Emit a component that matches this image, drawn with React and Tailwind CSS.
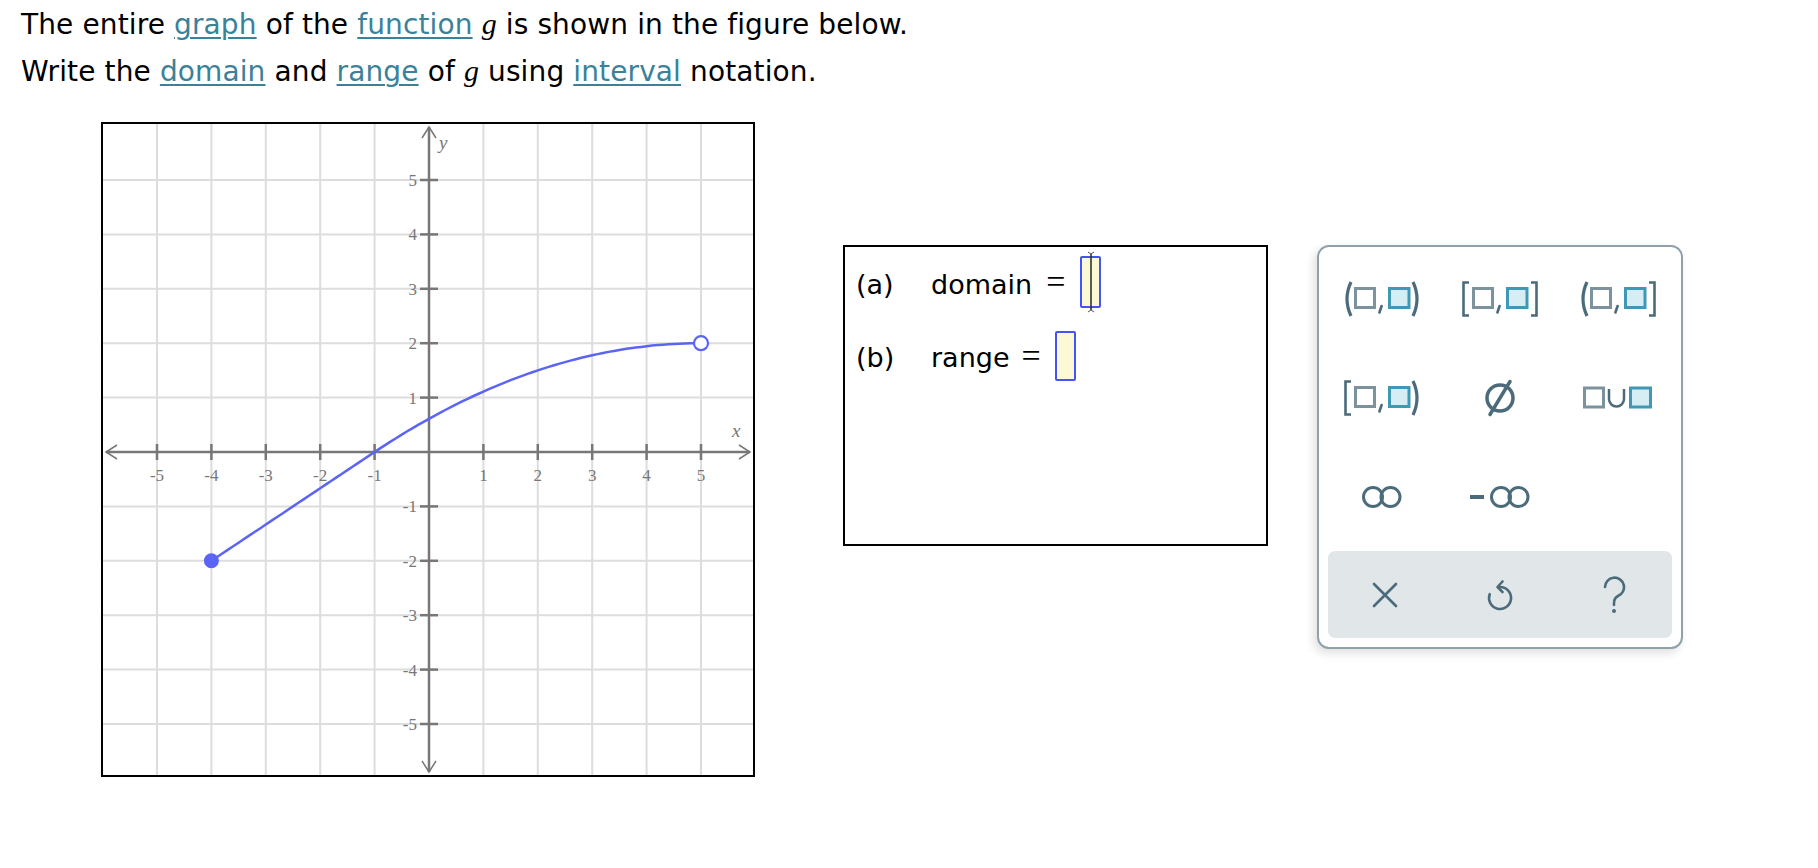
const DARK = "#4b6b7b";
const GRAY = "#7c929c";
const BLUE = "#4198b4";
const LIGHT = "#d6edf3";

const U = 54.4;
const OX = 326;
const OY = 328;
const px = (x) => OX + x * U;
const py = (y) => OY - y * U;

function curvePath() {
  const pts = [];
  for (let i = 0; i <= 90; i++) {
    const x = -4 + i * 0.1;
    const y = x < -1 ? (2 / 3) * (x + 1) : 2 - ((5 - x) * (5 - x)) / 18;
    pts.push(`${px(x).toFixed(1)},${py(y).toFixed(1)}`);
  }
  return "M" + pts.join(" L");
}

function Graph() {
  const ticks = [-5, -4, -3, -2, -1, 1, 2, 3, 4, 5];
  return (
    <div className="w-[654px] h-[655px] border-2 border-black bg-white shrink-0">
      <svg width="650" height="651" className="block">
        {ticks.map((i) => (
          <g key={i}>
            <line x1={px(i)} y1="0" x2={px(i)} y2="651" stroke="#dddddd" strokeWidth="2" />
            <line x1="0" y1={py(i)} x2="650" y2={py(i)} stroke="#dddddd" strokeWidth="2" />
          </g>
        ))}
        {/* axes */}
        <line x1="3" y1={OY} x2="647" y2={OY} stroke="#777" strokeWidth="2.5" />
        <line x1={OX} y1="3" x2={OX} y2="648" stroke="#777" strokeWidth="2.5" />
        <path d={`M14 ${OY - 7} L3 ${OY} L14 ${OY + 7}`} fill="none" stroke="#777" strokeWidth="1.5" />
        <path d={`M636 ${OY - 7} L647 ${OY} L636 ${OY + 7}`} fill="none" stroke="#777" strokeWidth="1.5" />
        <path d={`M${OX - 7} 14 L${OX} 3 L${OX + 7} 14`} fill="none" stroke="#777" strokeWidth="1.5" />
        <path d={`M${OX - 7} 637 L${OX} 648 L${OX + 7} 637`} fill="none" stroke="#777" strokeWidth="1.5" />
        {ticks.map((i) => (
          <g key={"t" + i}>
            <line x1={px(i)} y1={OY - 8} x2={px(i)} y2={OY + 8} stroke="#777" strokeWidth="2.5" />
            <line x1={OX - 9} y1={py(i)} x2={OX + 9} y2={py(i)} stroke="#777" strokeWidth="2.5" />
            <text
              x={px(i)}
              y={OY + 29}
              textAnchor="middle"
              fontFamily="'Liberation Serif', serif"
              fontSize="17"
              fill="#777"
            >
              {i}
            </text>
            <text
              x={OX - 12}
              y={py(i) + 6}
              textAnchor="end"
              fontFamily="'Liberation Serif', serif"
              fontSize="17"
              fill="#777"
            >
              {i}
            </text>
          </g>
        ))}
        <text x="336" y="25" fontFamily="'Liberation Serif', serif" fontStyle="italic" fontSize="19" fill="#777">
          y
        </text>
        <text x="629" y="313" fontFamily="'Liberation Serif', serif" fontStyle="italic" fontSize="19" fill="#777">
          x
        </text>
        {/* the function */}
        <path d={curvePath()} fill="none" stroke="#5b64f4" strokeWidth="2.5" />
        <circle cx={px(-4)} cy={py(-2)} r="7.5" fill="#5b64f4" />
        <circle cx={px(5)} cy={py(2)} r="7" fill="white" stroke="#5b64f4" strokeWidth="2.2" />
      </svg>
    </div>
  );
}

function Interval({ left, right }) {
  return (
    <svg width="78" height="36">
      {left === "(" ? (
        <path d="M8 1 Q0 18 8 35" fill="none" stroke={DARK} strokeWidth="3.2" />
      ) : (
        <path d="M8 1.5 H2.5 V34.5 H8" fill="none" stroke={DARK} strokeWidth="2.6" />
      )}
      <rect x="12.5" y="7.5" width="19" height="19" fill="white" stroke={GRAY} strokeWidth="3" />
      <path d="M38.6 25 L36.4 31.5" stroke={DARK} strokeWidth="2.6" strokeLinecap="round" />
      <rect x="46.5" y="7.5" width="19.5" height="19" fill={LIGHT} stroke={BLUE} strokeWidth="3" />
      {right === ")" ? (
        <path d="M70 1 Q78 18 70 35" fill="none" stroke={DARK} strokeWidth="3.2" />
      ) : (
        <path d="M70 1.5 H75.5 V34.5 H70" fill="none" stroke={DARK} strokeWidth="2.6" />
      )}
    </svg>
  );
}

function EmptySet() {
  return (
    <svg width="38" height="38">
      <circle cx="19" cy="19" r="13" fill="none" stroke={DARK} strokeWidth="3.5" />
      <line x1="29" y1="2.5" x2="9" y2="35.5" stroke={DARK} strokeWidth="3.5" strokeLinecap="round" />
    </svg>
  );
}

function Union() {
  return (
    <svg width="70" height="24">
      <rect x="1.5" y="2" width="19" height="19" fill="white" stroke={GRAY} strokeWidth="3" />
      <path d="M26 3 V13 A7.5 7.5 0 0 0 41 13 V3" fill="none" stroke={DARK} strokeWidth="2.5" />
      <rect x="47.5" y="2" width="20" height="19" fill={LIGHT} stroke={BLUE} strokeWidth="3" />
    </svg>
  );
}

function Infinity({ minus }) {
  return (
    <svg width={minus ? 60 : 40} height="24">
      {minus && <rect x="0" y="10" width="14" height="4" fill={DARK} />}
      <g transform={minus ? "translate(20 0)" : undefined}>
        <circle cx="11" cy="12" r="9.5" fill="none" stroke={DARK} strokeWidth="3" />
        <circle cx="28.5" cy="12" r="9.5" fill="none" stroke={DARK} strokeWidth="3" />
      </g>
    </svg>
  );
}

function Cell({ children }) {
  return <div className="flex items-center justify-center">{children}</div>;
}

function Keypad() {
  return (
    <div className="ml-[49px] mt-[123px] w-[366px] h-[404px] shrink-0 rounded-[12px] border-2 border-[#8fa1aa] bg-white shadow-[-3px_4px_10px_rgba(0,0,0,0.13)] pt-[2px] px-[4px]">
      <div className="grid grid-cols-3 grid-rows-[99px_99px_99px]">
        <Cell>
          <Interval left="(" right=")" />
        </Cell>
        <Cell>
          <Interval left="[" right="]" />
        </Cell>
        <Cell>
          <Interval left="(" right="]" />
        </Cell>
        <Cell>
          <Interval left="[" right=")" />
        </Cell>
        <Cell>
          <EmptySet />
        </Cell>
        <Cell>
          <Union />
        </Cell>
        <Cell>
          <Infinity />
        </Cell>
        <Cell>
          <Infinity minus />
        </Cell>
        <div />
      </div>
      <div className="mx-[5px] mt-[5px] h-[87px] rounded-[7px] bg-[#e1e6e9] grid grid-cols-3">
        <Cell>
          <svg width="26" height="26">
            <path d="M2 2 L24 24 M24 2 L2 24" stroke={DARK} strokeWidth="2.6" strokeLinecap="round" />
          </svg>
        </Cell>
        <Cell>
          <svg width="28" height="36">
            <path d="M14 10 A11 11 0 1 1 3.7 17.2" fill="none" stroke={DARK} strokeWidth="2.6" strokeLinecap="round" />
            <path d="M16.5 4.5 L11.5 10 L16.5 15" fill="none" stroke={DARK} strokeWidth="2.6" strokeLinecap="round" strokeLinejoin="round" />
          </svg>
        </Cell>
        <Cell>
          <svg width="26" height="38">
            <path d="M3 11 A9.5 9.5 0 1 1 16 20 Q12 22 12 27 V29" fill="none" stroke={DARK} strokeWidth="2.6" strokeLinecap="round" />
            <circle cx="12" cy="35" r="2" fill={DARK} />
          </svg>
        </Cell>
      </div>
    </div>
  );
}

function AnswerBox({ height, cursor }) {
  return (
    <span className={`relative inline-block w-[21px] ${height} rounded-[2px] border-2 border-[#4453f2] bg-[#fdf8d6]`}>
      {cursor && (
        <svg width="12" height="64" className="absolute left-[2.5px] -top-[8px]">
          <path d="M6 4 V60" stroke="#333" strokeWidth="1.6" />
          <path d="M3 2 L6 4 L9 2 M3 62 L6 60 L9 62" fill="none" stroke="#555" strokeWidth="1" />
        </svg>
      )}
    </span>
  );
}

function Answers() {
  return (
    <div className="ml-[88px] mt-[123px] w-[425px] h-[301px] shrink-0 border-2 border-black bg-white pt-[9px] pl-[11px] font-['DejaVu_Sans',sans-serif] text-[27px] text-black">
      <div className="flex items-center h-[52px]">
        <span className="pt-[6px] w-[75px]">(a)</span>
        <span className="pt-[6px]">domain</span>
        <span className="ml-[14px] mr-[15px] font-['Liberation_Serif',serif] text-[34px] leading-none">=</span>
        <AnswerBox height="h-[52px]" cursor />
      </div>
      <div className="flex items-center h-[50px] mt-[23px]">
        <span className="pt-[5px] w-[75px]">(b)</span>
        <span className="pt-[5px]">range</span>
        <span className="ml-[12px] mr-[14px] font-['Liberation_Serif',serif] text-[34px] leading-none">=</span>
        <AnswerBox height="h-[50px]" />
      </div>
    </div>
  );
}

function Link({ children }) {
  return <span className="text-[#3a8299] underline decoration-[1.5px] underline-offset-[3px]">{children}</span>;
}

function G() {
  return <i className="font-['Liberation_Serif',serif] text-[30px]">g</i>;
}

export default function App() {
  return (
    <div className="min-h-screen bg-white px-[21px] pt-[1px] font-['DejaVu_Sans',sans-serif] text-black">
      <p className="text-[28px] leading-[46px] tracking-[0.12px]">
        The entire <Link>graph</Link> of the <Link>function</Link> <G /> is shown in the figure below.
      </p>
      <p className="text-[28px] leading-[46px] tracking-[0.12px]">
        Write the <Link>domain</Link> and <Link>range</Link> of <G /> using <Link>interval</Link> notation.
      </p>
      <div className="flex items-start mt-[27px] ml-[80px]">
        <Graph />
        <Answers />
        <Keypad />
      </div>
    </div>
  );
}
